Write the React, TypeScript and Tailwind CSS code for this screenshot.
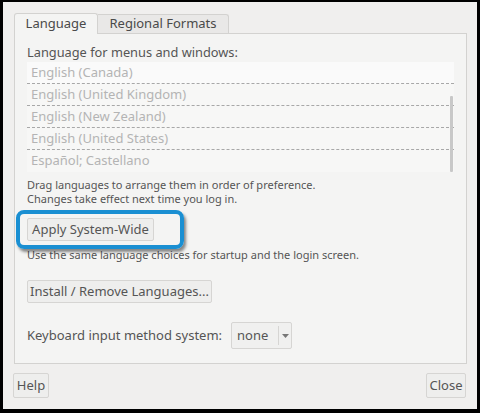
import React from "react";

const langs = [
  "English (Canada)",
  "English (United Kingdom)",
  "English (New Zealand)",
  "English (United States)",
  "Español; Castellano",
];

export default function App() {
  return (
    <div
      className="w-[480px] h-[413px] bg-black pl-[3px] pt-[2px] pr-[3px] pb-[4px]"
      style={{ fontFamily: '"Noto Sans", "Open Sans", sans-serif' }}
    >
      <div className="relative w-full h-full bg-[#f0efee] flex flex-col px-[10px] pt-[10px]">
        {/* Tabs */}
        <div className="flex items-end h-[21px] pl-[1px]">
          <div className="h-[21px] w-[84px] bg-[#f4f4f3] border border-b-0 border-[#d3d2d0] rounded-t-[3px] flex items-center justify-center text-[13px] text-[#4a4a4a] relative z-10 -mb-px">
            Language
          </div>
          <div className="h-[19px] w-[131px] bg-[#e9e8e7] border border-b-0 border-l-0 border-[#d3d2d0] rounded-tr-[3px] flex items-center justify-center text-[13px] text-[#4a4a4a]">
            Regional Formats
          </div>
        </div>
        {/* Panel */}
        <div className="ml-[1px] w-[453px] h-[331px] bg-[#f4f4f3] border border-[#d3d2d0] flex flex-col px-[12px] pt-[10px]">
          <div className="text-[12.8px] leading-[16px] text-[#555]">
            Language for menus and windows:
          </div>
          <div className="relative mt-[2px] w-[427px] h-[110px] bg-[#f7f7f6] flex flex-col">
            {langs.map((l, i) => (
              <div
                key={l}
                className={
                  "h-[22px] flex items-center pl-[4px] text-[13px] text-[#b4b4b4] " +
                  (i < langs.length - 1 ? "border-b border-dashed border-[#a8a8a8] " : "") +
                  (i === 0 ? "bg-[#fafafa] " : "")
                }
              >
                {l}
              </div>
            ))}
            <div className="absolute right-[1px] top-[34px] w-[3px] h-[76px] bg-[#c8c8c8] rounded-[1px]" />
          </div>
          <div className="mt-[6px] text-[11px] leading-[14px] text-[#555]">
            <div>Drag languages to arrange them in order of preference.</div>
            <div>Changes take effect next time you log in.</div>
          </div>
          <div className="mt-[12px] h-[23px] w-[127px] bg-[#eeeeed] border border-[#d6d5d3] rounded-[2px] flex items-center justify-center text-[13px] text-[#555]">
            Apply System-Wide
          </div>
          <div className="mt-[7px] text-[11px] leading-[14px] text-[#555]">
            Use the same language choices for startup and the login screen.
          </div>
          <div className="mt-[18px] h-[23px] w-[185px] bg-[#eeeeed] border border-[#d6d5d3] rounded-[2px] flex items-center justify-center text-[13px] text-[#555]">
            Install / Remove Languages...
          </div>
          <div className="mt-[19px] flex items-center h-[27px]">
            <div className="text-[13px] text-[#555] w-[204px]">Keyboard input method system:</div>
            <div className="h-[27px] w-[61px] bg-[#f0f0ef] border border-[#d6d5d3] rounded-[2px] flex items-center">
              <div className="flex-1 text-[13px] text-[#555] pl-[5px]">none</div>
              <div className="w-px h-[19px] bg-[#d6d5d3]" />
              <div className="w-[12px] flex items-center justify-center">
                <svg width="7" height="4" viewBox="0 0 7 4">
                  <path d="M0 0 L7 0 L3.5 4 Z" fill="#777" />
                </svg>
              </div>
            </div>
          </div>
        </div>
        {/* Bottom buttons */}
        <div className="flex justify-between mt-[9px] pr-[1px]">
          <div className="h-[25px] w-[36px] bg-[#eeeeed] border border-[#d6d5d3] rounded-[2px] flex items-center justify-center text-[13px] text-[#555]">
            Help
          </div>
          <div className="h-[25px] w-[40px] bg-[#eeeeed] border border-[#d6d5d3] rounded-[2px] flex items-center justify-center text-[13px] text-[#555]">
            Close
          </div>
        </div>
        {/* Blue highlight annotation */}
        <div className="absolute left-[13px] top-[208px] w-[168px] h-[39px] border-[4px] border-[#1a8fd2] rounded-[8px] shadow-[2px_3px_3px_rgba(0,0,0,0.45)]" />
      </div>
    </div>
  );
}
